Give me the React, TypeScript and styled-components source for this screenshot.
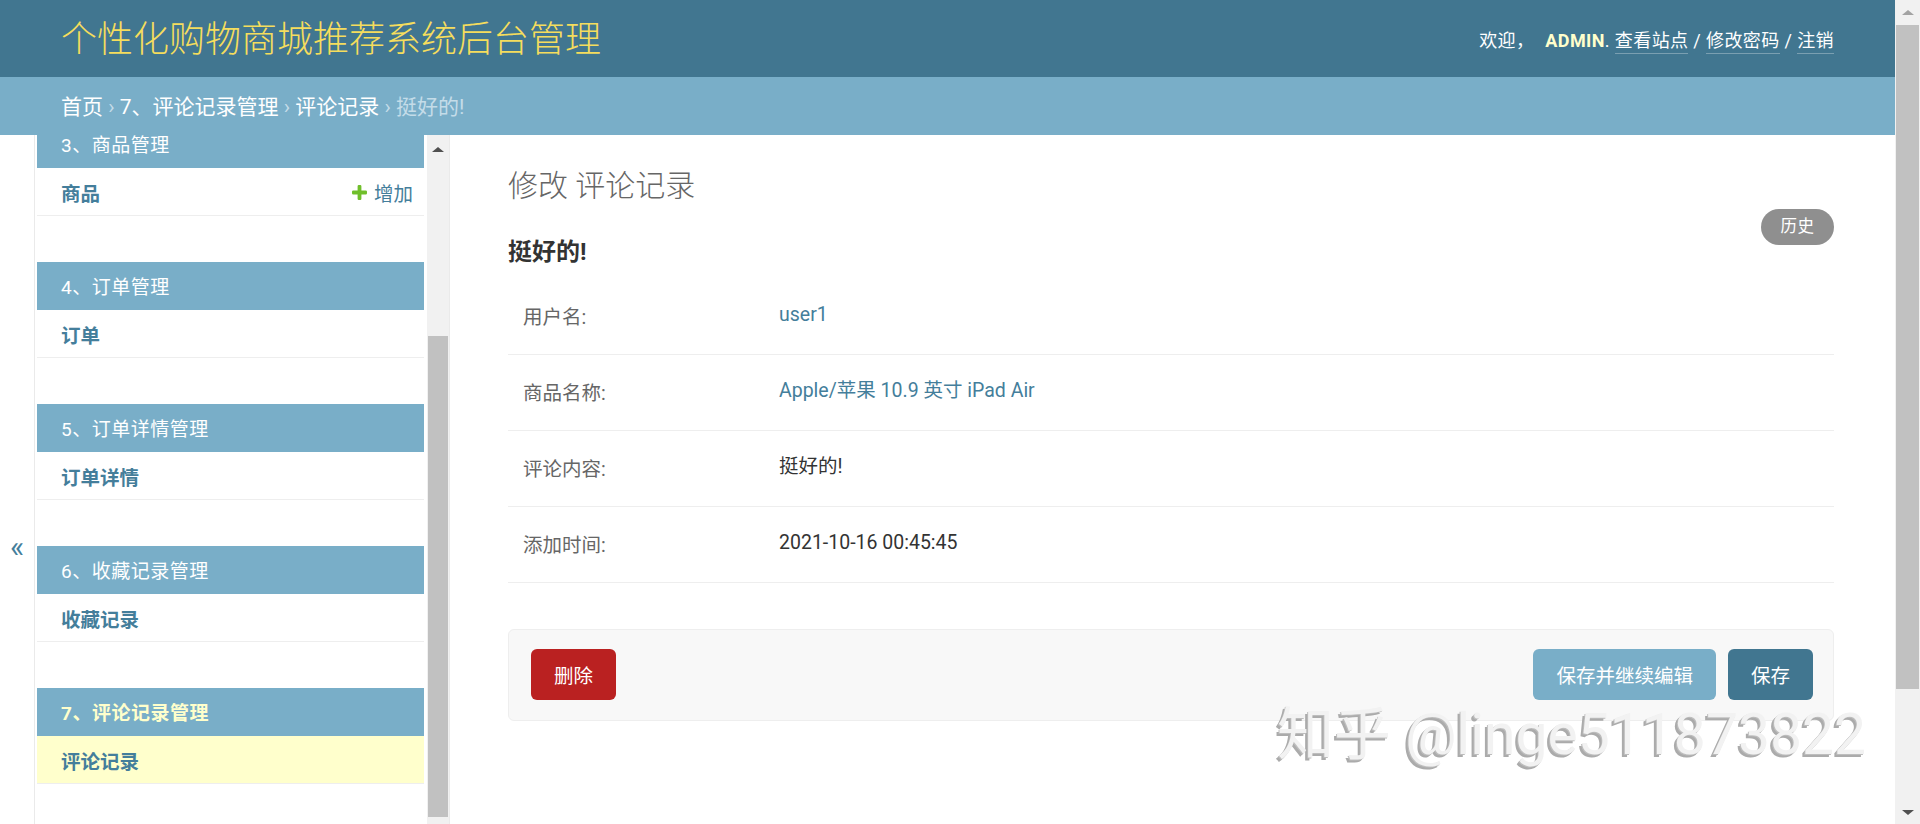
import React, { useLayoutEffect, useRef } from 'react';
import styled, { createGlobalStyle } from 'styled-components';

type NavModule = {
	id: number;
	title: string;
	model: string;
	canAdd?: boolean;
	current?: boolean;
};

type Field = {
	label: string;
	value: string;
	link?: boolean;
};

const modules: NavModule[] = [
	{ id: 1, title: '1、用户管理', model: '用户' },
	{ id: 2, title: '2、商品分类管理', model: '商品分类' },
	{ id: 3, title: '3、商品管理', model: '商品', canAdd: true },
	{ id: 4, title: '4、订单管理', model: '订单' },
	{ id: 5, title: '5、订单详情管理', model: '订单详情' },
	{ id: 6, title: '6、收藏记录管理', model: '收藏记录' },
	{ id: 7, title: '7、评论记录管理', model: '评论记录', current: true },
	{ id: 8, title: '8、购物车管理', model: '购物车' },
	{ id: 9, title: '认证和授权', model: '组' }
];

const fields: Field[] = [
	{ label: '用户名:', value: 'user1', link: true },
	{ label: '商品名称:', value: 'Apple/苹果 10.9 英寸 iPad Air', link: true },
	{ label: '评论内容:', value: '挺好的!' },
	{ label: '添加时间:', value: '2021-10-16 00:45:45' }
];

// the nav is scrolled so that module 3 sits 15px under the top edge
const NAV_ANCHOR = 3;
const NAV_OFFSET = 15;

const AddIcon = () => (
	<svg width="15" height="15" viewBox="0 0 15 15">
		<path
			d="M5.6 1.2q0-1.2 1.2-1.2h1.4q1.2 0 1.2 1.2v4.4h4.4q1.2 0 1.2 1.2v1.4q0 1.2-1.2 1.2H9.4v4.4q0 1.2-1.2 1.2H6.8q-1.2 0-1.2-1.2V9.4H1.2Q0 9.4 0 8.2V6.8q0-1.2 1.2-1.2h4.4z"
			fill="#70bf2b"
		/>
	</svg>
);

type ScrollProps = {
	width: number;
	buttonHeight: number;
	thumbTop: number;
	thumbHeight: number;
	upActive?: boolean;
	showDown?: boolean;
};

const Scrollbar: React.FC<ScrollProps> = ({
	width,
	buttonHeight,
	thumbTop,
	thumbHeight,
	upActive,
	showDown
}) => (
	<ScrollTrack $width={width}>
		<ArrowButton $height={buttonHeight} $dir="up" $active={upActive} />
		<ThumbLane>
			<Thumb $top={thumbTop} $height={thumbHeight} />
		</ThumbLane>
		{showDown && <ArrowButton $height={buttonHeight} $dir="down" $active />}
	</ScrollTrack>
);

const App: React.FC = () => {
	const navRef = useRef<HTMLDivElement>(null);
	const anchorRef = useRef<HTMLDivElement>(null);

	useLayoutEffect(() => {
		if (navRef.current && anchorRef.current) {
			navRef.current.scrollTop = anchorRef.current.offsetTop + NAV_OFFSET;
		}
	}, []);

	return (
		<>
			<GlobalStyle />
			<Page>
				<Main>
					<Header>
						<Branding>个性化购物商城推荐系统后台管理</Branding>
						<UserTools>
							欢迎， <strong>admin</strong>. <ToolLink>查看站点</ToolLink> /{' '}
							<ToolLink>修改密码</ToolLink> / <ToolLink>注销</ToolLink>
						</UserTools>
					</Header>
					<Breadcrumbs>
						<Crumb>首页</Crumb> › <Crumb>7、评论记录管理</Crumb> ›{' '}
						<Crumb>评论记录</Crumb> › 挺好的!
					</Breadcrumbs>

					<Body>
						<ToggleNav>«</ToggleNav>
						<Sidebar>
							<NavScroll ref={navRef}>
								{modules.map((m) => (
									<Module key={m.id} ref={m.id === NAV_ANCHOR ? anchorRef : undefined}>
										<Caption $current={m.current}>{m.title}</Caption>
										<ModelRow $current={m.current}>
											<ModelLink>{m.model}</ModelLink>
											{m.canAdd && (
												<AddLink>
													<AddIcon />
													增加
												</AddLink>
											)}
										</ModelRow>
									</Module>
								))}
							</NavScroll>
							<Scrollbar width={22} buttonHeight={28} thumbTop={173} thumbHeight={481} upActive />
						</Sidebar>

						<Content>
							<PageTitle>修改 评论记录</PageTitle>
							<ObjectHeader>
								<ObjectTitle>挺好的!</ObjectTitle>
								<HistoryLink>历史</HistoryLink>
							</ObjectHeader>

							<Fieldset>
								{fields.map((f) => (
									<FormRow key={f.label}>
										<Label>{f.label}</Label>
										<Readonly>{f.link ? <ValueLink>{f.value}</ValueLink> : f.value}</Readonly>
									</FormRow>
								))}
							</Fieldset>

							<SubmitRow>
								<Button $variant="danger">删除</Button>
								<ButtonGroup>
									<Button $variant="secondary">保存并继续编辑</Button>
									<Button $variant="primary">保存</Button>
								</ButtonGroup>
							</SubmitRow>
						</Content>
					</Body>
				</Main>

				<Scrollbar width={25} buttonHeight={24} thumbTop={1} thumbHeight={664} showDown />

				<Watermark>知乎 @linge511873822</Watermark>
			</Page>
		</>
	);
};

const GlobalStyle = createGlobalStyle`
	* {
		box-sizing: border-box;
	}

	html,
	body {
		margin: 0;
		padding: 0;
	}

	body {
		font-family: Roboto, 'Noto Sans CJK SC', sans-serif;
		color: #333;
		background: #fff;
	}
`;

const Page = styled.div`
	position: relative;
	display: flex;
	height: 100vh;
	overflow: hidden;
`;

const Main = styled.div`
	flex: 1;
	min-width: 0;
	display: flex;
	flex-direction: column;
`;

const Header = styled.header`
	flex: none;
	height: 77px;
	padding: 0 61px;
	display: flex;
	align-items: center;
	justify-content: space-between;
	background: #417690;
`;

const Branding = styled.h1`
	margin: 2px 0 0;
	font-size: 36px;
	font-weight: 300;
	line-height: 1;
	color: #f5dd5d;
`;

const UserTools = styled.div`
	font-size: 18px;
	letter-spacing: 0.4px;
	color: #fff;
	white-space: pre;

	strong {
		margin-left: 6px;
		color: #ffc;
		font-weight: 700;
		text-transform: uppercase;
	}
`;

const ToolLink = styled.a`
	color: #fff;
	padding-bottom: 2px;
	border-bottom: 1px solid rgba(255, 255, 255, 0.3);
	cursor: pointer;
`;

const Breadcrumbs = styled.nav`
	flex: none;
	height: 58px;
	padding: 2px 61px 0;
	line-height: 56px;
	font-size: 21px;
	color: #c4dce8;
	background: #79aec8;
	white-space: pre;
`;

const Crumb = styled.a`
	color: #fff;
	cursor: pointer;
`;

const Body = styled.div`
	flex: 1;
	min-height: 0;
	display: flex;
	align-items: flex-start;
`;

const ToggleNav = styled.button`
	flex: none;
	width: 35px;
	height: 100vh;
	padding: 0 0 2px;
	border: 0;
	border-right: 1px solid #eaeaea;
	background: #fff;
	color: #447e9b;
	font-family: Roboto, sans-serif;
	font-size: 30px;
	cursor: pointer;
`;

const Sidebar = styled.aside`
	flex: none;
	width: 415px;
	height: 100vh;
	display: flex;
	border-right: 1px solid #eaeaea;
`;

const NavScroll = styled.div`
	position: relative;
	flex: 1;
	padding: 0 3px 0 2px;
	overflow: hidden;
`;

const Module = styled.div`
	margin-bottom: 46px;
`;

const Caption = styled.div<{ $current?: boolean }>`
	height: 48px;
	padding: 3px 24px 0;
	line-height: 45px;
	font-size: 19px;
	letter-spacing: 0.5px;
	font-weight: ${({ $current }) => ($current ? 700 : 400)};
	color: ${({ $current }) => ($current ? '#ffc' : '#fff')};
	background: #79aec8;
`;

const ModelRow = styled.div<{ $current?: boolean }>`
	height: 48px;
	padding: 1px 11px 0 24px;
	display: flex;
	align-items: center;
	justify-content: space-between;
	border-bottom: 1px solid #eee;
	background: ${({ $current }) => ($current ? '#ffc' : '#fff')};
`;

const ModelLink = styled.a`
	font-size: 19.5px;
	font-weight: 700;
	color: #447e9b;
	cursor: pointer;
`;

const AddLink = styled.a`
	display: flex;
	align-items: center;
	gap: 7px;
	font-size: 19.5px;
	color: #447e9b;
	cursor: pointer;
`;

const ScrollTrack = styled.div<{ $width: number }>`
	flex: none;
	width: ${({ $width }) => $width}px;
	height: 100vh;
	display: flex;
	flex-direction: column;
	background: #f1f1f1;
`;

const ArrowButton = styled.div<{ $height: number; $dir: 'up' | 'down'; $active?: boolean }>`
	flex: none;
	height: ${({ $height }) => $height}px;
	display: flex;
	align-items: center;
	justify-content: center;

	&::before {
		content: '';
		border-left: 6px solid transparent;
		border-right: 6px solid transparent;
		${({ $dir, $active }) =>
			`border-${$dir === 'up' ? 'bottom' : 'top'}: 5px solid ${$active ? '#505050' : '#a3a3a3'};`}
	}
`;

const ThumbLane = styled.div`
	flex: 1;
	padding: 0 1px;
`;

const Thumb = styled.div<{ $top: number; $height: number }>`
	margin-top: ${({ $top }) => $top}px;
	height: ${({ $height }) => $height}px;
	background: #c1c1c1;
`;

const Content = styled.main`
	flex: 1;
	min-width: 0;
	padding: 31px 61px 0 58px;
`;

const PageTitle = styled.h1`
	margin: 0 0 3px;
	font-size: 30px;
	font-weight: 300;
	line-height: 40px;
	color: #666;
`;

const ObjectHeader = styled.div`
	display: flex;
	align-items: flex-start;
	justify-content: space-between;
`;

const ObjectTitle = styled.h2`
	margin: 28px 0 0;
	font-size: 24px;
	font-weight: 700;
	line-height: 30px;
	color: #333;
`;

const HistoryLink = styled.a`
	height: 36px;
	padding: 0 19.5px;
	line-height: 36px;
	border-radius: 18px;
	background: #8f8f8f;
	color: #fff;
	font-size: 16.5px;
	letter-spacing: 0.5px;
	cursor: pointer;
`;

const Fieldset = styled.fieldset`
	margin: 12px 0 0;
	padding: 0;
	border: 0;
`;

const FormRow = styled.div`
	height: 76px;
	padding: 0 15px;
	display: flex;
	border-bottom: 1px solid #eee;
	font-size: 19.5px;
`;

const Label = styled.label`
	flex: none;
	width: 256px;
	padding-top: 29px;
	line-height: 1;
	color: #666;
`;

const Readonly = styled.div`
	padding-top: 21px;
	line-height: 30px;
	color: #333;
`;

const ValueLink = styled.a`
	color: #447e9b;
	cursor: pointer;
`;

const SubmitRow = styled.div`
	margin-top: 46px;
	padding: 19px 20px 20px 22px;
	display: flex;
	align-items: center;
	justify-content: space-between;
	background: #f8f8f8;
	border: 1px solid #eee;
	border-radius: 6px;
`;

const ButtonGroup = styled.div`
	display: flex;
	gap: 12px;
`;

const buttonColors = {
	danger: '#ba2121',
	secondary: '#79aec8',
	primary: '#417690'
};

const Button = styled.button<{ $variant: keyof typeof buttonColors }>`
	height: 51px;
	padding: 0 23px;
	border: 0;
	border-radius: 6px;
	background: ${({ $variant }) => buttonColors[$variant]};
	color: #fff;
	font-family: inherit;
	font-size: 19.5px;
	cursor: pointer;
`;

const Watermark = styled.div`
	position: absolute;
	left: 1277px;
	top: 706px;
	font-family: Roboto, 'Noto Sans CJK SC', sans-serif;
	font-size: 57px;
	line-height: 1;
	color: #f2f2f2;
	text-shadow: -1px 1px 0 #bdbdbd, -3px 3px 0 #ababab;
	white-space: nowrap;
	pointer-events: none;
`;

export default App;
